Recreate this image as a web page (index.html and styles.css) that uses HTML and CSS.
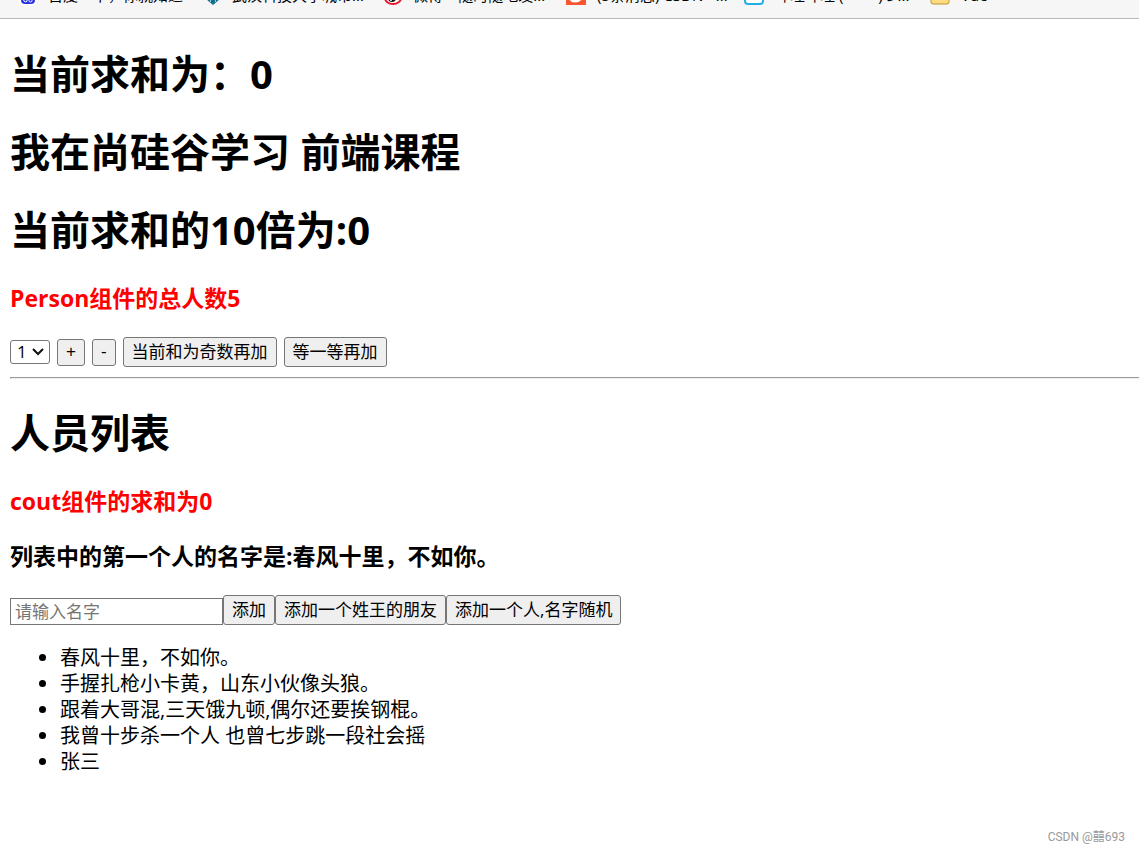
FILE: index.html
```html
<!DOCTYPE html>
<html lang="zh-CN">
<head>
<meta charset="utf-8">
<title>redux</title>
<link rel="stylesheet" href="styles.css">
</head>
<body>
  <nav class="bookmarks">
    <a class="b1" href="#">
      <svg width="18" height="16" viewBox="0 0 18 16"><rect width="18" height="16" rx="2" fill="#fff"/><rect x="2" y="5" width="14" height="10" rx="4" fill="#2932e1"/><circle cx="6.500" cy="11" r="1.800" fill="none" stroke="#fff"/><path d="M10 9v2.500q0 1.500 1.500 1.500T13 11.500V9" fill="none" stroke="#fff"/></svg>
      <span>百度一下，你就知道</span>
    </a>
    <a class="b2" href="#">
      <svg width="16" height="16" viewBox="0 0 16 16"><path d="M1 4h14v6l-7 6-7-6z" fill="#14708f"/><path d="M5.500 4v9M10.500 4v9" stroke="#9cc9d6"/></svg>
      <span>武汉科技大学城市...</span>
    </a>
    <a class="b3" href="#">
      <svg width="18" height="16" viewBox="0 0 18 16"><ellipse cx="9" cy="9" rx="8" ry="6" fill="#fff" stroke="#e6162d" stroke-width="2"/><circle cx="8" cy="9" r="4" fill="#111"/><circle cx="7" cy="11" r="1" fill="#fff"/></svg>
      <span>微博 – 随时随地发...</span>
    </a>
    <a class="b4" href="#">
      <svg width="20" height="18" viewBox="0 0 20 18"><rect width="20" height="18" fill="#fc5531"/><path d="M15 4q-8-4-10 3t4 7q4 0 6-3" fill="none" stroke="#fff" stroke-width="3"/></svg>
      <span>(5条消息) CSDN - ...</span>
    </a>
    <a class="b5" href="#">
      <svg width="20" height="16" viewBox="0 0 20 16"><rect x="1" y="3" width="18" height="12" rx="3" fill="#fff" stroke="#20b0e3" stroke-width="2"/></svg>
      <span>哔哩哔哩 (゜-゜)つ...</span>
    </a>
    <a class="b6" href="#">
      <svg width="20" height="16" viewBox="0 0 20 16"><path d="M1 2h7l2 2h9v9q0 2-2 2H3q-2 0-2-2z" fill="#ffdc82" stroke="#be9328"/></svg>
      <span>Vue</span>
    </a>
  </nav>
  <main>
    <h1>当前求和为：0</h1>
    <h1>我在尚硅谷学习 前端课程</h1>
    <h1>当前求和的10倍为:0</h1>
    <h3 class="red">Person组件的总人数5</h3>
    <div class="count">
      <div class="picker">
        <select aria-label="数值">
          <option value="1">1</option>
          <option value="2">2</option>
          <option value="3">3</option>
        </select>
        <svg width="12" height="8" viewBox="0 0 12 8"><path d="M1 1l5 5 5-5" fill="none" stroke="#111" stroke-width="2"/></svg>
      </div>
      <button class="op">+</button>
      <button class="op">-</button>
      <button>当前和为奇数再加</button>
      <button>等一等再加</button>
    </div>
    <hr>
    <h1>人员列表</h1>
    <h3 class="red">cout组件的求和为0</h3>
    <h3>列表中的第一个人的名字是:春风十里，不如你。</h3>
    <div class="person">
      <input type="text" placeholder="请输入名字" aria-label="请输入名字">
      <button>添加</button>
      <button>添加一个姓王的朋友</button>
      <button>添加一个人,名字随机</button>
    </div>
    <ul>
      <li>春风十里，不如你。</li>
      <li>手握扎枪小卡黄，山东小伙像头狼。</li>
      <li>跟着大哥混,三天饿九顿,偶尔还要挨钢棍。</li>
      <li>我曾十步杀一个人 也曾七步跳一段社会摇</li>
      <li>张三</li>
    </ul>
  </main>
  <div class="watermark">CSDN @囍693</div>
</body>
</html>
```
FILE: styles.css
```css
body {
  margin: 0;
  background: #fff;
  color: #000;
  font-family: "Open Sans", "Noto Sans CJK SC", sans-serif;
  font-size: 20px;
  line-height: 26px;
}

/* only the lower edge of the bookmarks shows */
.bookmarks {
  display: flex;
  align-items: flex-end;
  height: 5px;
  padding: 0 19px 13px;
  overflow: hidden;
  background: #f6f6f6;
  border-bottom: 1px solid #b9b9b9;
}

.bookmarks a {
  display: flex;
  flex: none;
  align-items: flex-end;
  gap: 11px;
  color: #000;
  font-size: 15px;
  line-height: 20px;
  text-decoration: none;
  white-space: nowrap;
}

.bookmarks .b1 {
  width: 186px;
}

.bookmarks .b2 {
  width: 179px;
}

.bookmarks .b3 {
  width: 182px;
}

.bookmarks .b4 {
  width: 178px;
}

.bookmarks .b5 {
  width: 186px;
}

main {
  display: flow-root;
  padding: 3px 0 0 10px;
}

h1 {
  margin: 26px 0;
  font-size: 40px;
  line-height: 52px;
}

h3 {
  margin: 23px 0;
  font-size: 23px;
  line-height: 32px;
}

.red {
  color: red;
}

.count,
.person {
  display: flex;
  align-items: center;
}

.count {
  gap: 7px;
}

.person {
  align-items: flex-end;
}

button,
select,
input {
  box-sizing: border-box;
  margin: 0;
  border: 1px solid #767676;
  color: #000;
  font-family: "Open Sans", "Noto Sans CJK SC", sans-serif;
  font-size: 17px;
}

button {
  height: 30px;
  padding: 0 8px;
  border-radius: 3px;
  background: #efefef;
  line-height: 26px;
}

.op {
  height: 27px;
  font-family: "Liberation Sans", Arial, sans-serif;
  line-height: 24px;
}

.picker {
  display: grid;
  align-items: center;
}

.picker select,
.picker svg {
  grid-area: 1 / 1;
}

.picker svg {
  justify-self: end;
  margin-right: 6px;
  pointer-events: none;
}

select {
  width: 40px;
  height: 24px;
  padding: 0 6px;
  border-radius: 3px;
  background: #fff;
  font-family: "Open Sans", sans-serif;
  line-height: 20px;
  -webkit-appearance: none;
  appearance: none;
}

input {
  width: 213px;
  height: 27px;
  padding: 0 4px;
}

input::placeholder {
  color: #757575;
}

hr {
  margin: 10px 0 28px;
  border: 1px solid #9a9a9a;
  border-right: 0;
  border-bottom-color: #eee;
}

ul {
  margin: 20px 0;
  padding-left: 50px;
}

.watermark {
  position: absolute;
  right: 14px;
  bottom: 6px;
  color: #999;
  font-family: Roboto, "Noto Sans CJK SC", sans-serif;
  font-size: 12px;
  line-height: 18px;
}
```
